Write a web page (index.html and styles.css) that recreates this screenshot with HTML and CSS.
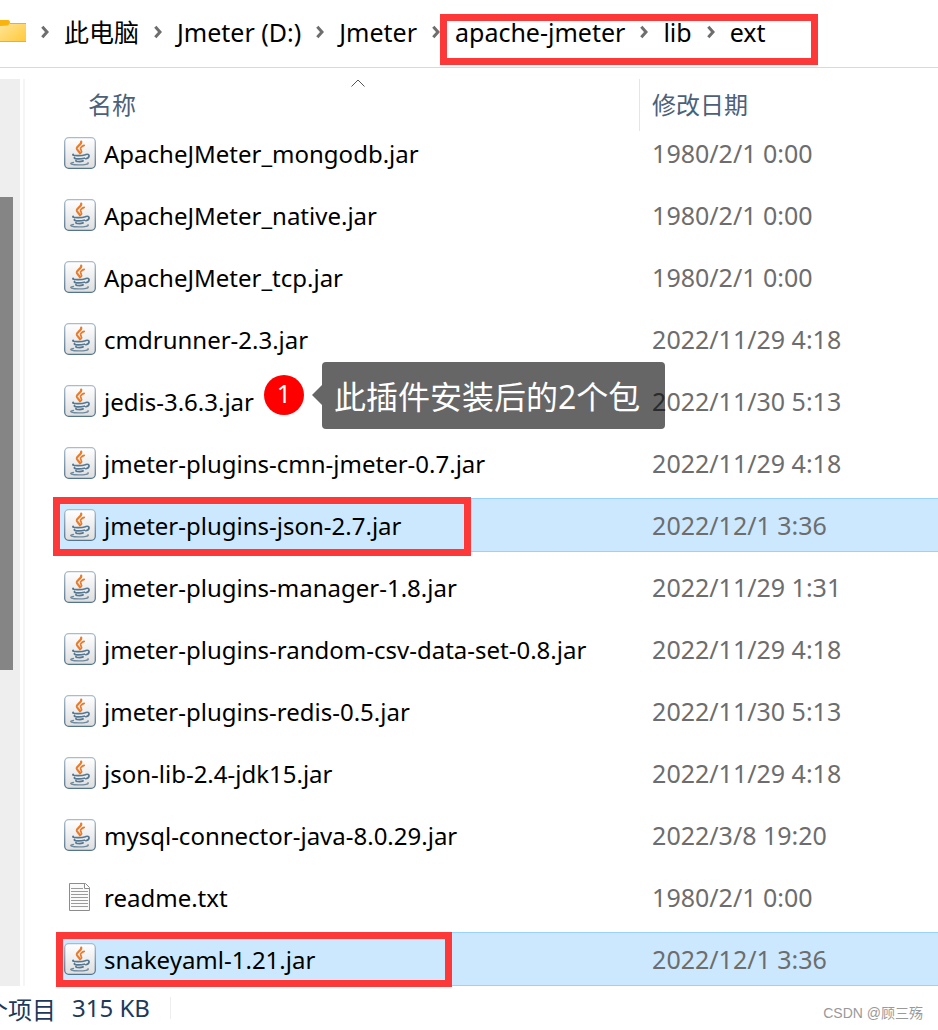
FILE: index.html
```html
<!DOCTYPE html>
<html lang="zh-CN">
<head>
    <meta charset="UTF-8">
    <meta name="viewport" content="width=device-width, initial-scale=1.0">
    <title>ext</title>
    <link rel="stylesheet" href="styles.css">
</head>
<body>
    <svg class="sprite" aria-hidden="true">
        <defs>
            <linearGradient id="paper" x1="0" y1="0" x2="0" y2="1">
                <stop offset="0" stop-color="#ffffff"/>
                <stop offset="1" stop-color="#dedede"/>
            </linearGradient>
            <linearGradient id="frame" x1="0" y1="0" x2="0" y2="1">
                <stop offset="0" stop-color="#a9bccb"/>
                <stop offset="1" stop-color="#55758f"/>
            </linearGradient>
            <linearGradient id="gold" x1="0" y1="0" x2="1" y2="1">
                <stop offset="0" stop-color="#ffe59a"/>
                <stop offset="1" stop-color="#ffc937"/>
            </linearGradient>
        </defs>
        <symbol id="jar" viewBox="0 0 32 32">
            <rect x="0.7" y="0.7" width="30.6" height="30.6" rx="4" fill="url(#paper)" stroke="url(#frame)" stroke-width="1.3"/>
            <g fill="none" stroke-linecap="round">
                <path d="M17.2 4.500c.8 3.100-5 4.500-4.400 7.300.4 1.500 2.500 2.500 3.100 4.500" stroke="#e87b2c" stroke-width="2.200"/>
                <path d="M20.200 8.400c-2.400.9-4.300 2.200-3.600 3.600.7 1.400 1.800 2.300.2 4" stroke="#e87b2c" stroke-width="1.700"/>
                <path d="M9.300 17.300c-1.500.8 1 1.300 4 1.300 2.900.1 5.900-.2 8.200-.9M10.500 20.500c-.6.900.9 1.300 2.900 1.400 2.400.1 4.800-.1 6.900-.7M12 23.400c-.5.700.8 1 2.200 1.100 1.800.1 3.500-.1 4.900-.6M21.800 17.500c4.200-1.300 4.400 3.100.1 4.200" stroke="#557791" stroke-width="1.700"/>
                <path d="M9.500 25.300c-6 1.300-1.300 2.600 5.500 2.600 5.600 0 10.300-.8 9-2.200" stroke="#6d899e" stroke-width="1.300"/>
            </g>
        </symbol>
        <symbol id="txt" viewBox="0 0 32 32">
            <path d="M5.500 2.500h16l4 4v23h-20z" fill="#fafafa" stroke="#8c8c8c"/>
            <path d="M20.500 2.500v5h5" fill="#fff" stroke="#8c8c8c"/>
            <path d="M7 7.500h12M7 10.500h17M7 13.500h17M7 16.500h17M7 19.500h17M7 22.500h17M7 25.500h17" stroke="#9a9a9a"/>
        </symbol>
        <symbol id="chevron" viewBox="0 0 8 14">
            <path d="M1.300 1.800l4.700 5.200-4.700 5.200" fill="none" stroke="#6e6e6e" stroke-width="3"/>
        </symbol>
    </svg>

    <nav class="address" aria-label="地址">
        <svg class="folder" viewBox="0 0 26 24">
            <path d="M0 0h8q2 0 2 3v3H0z" fill="#f9b30f"/>
            <path d="M0 6l8-.5 2-2.500h16V22H0z" fill="url(#gold)"/>
            <path d="M10 3.500h16M0 21.500h26" stroke="#e2b13c"/>
        </svg>
        <svg class="chevron"><use href="#chevron"/></svg>
        <a href="#">此电脑</a>
        <svg class="chevron"><use href="#chevron"/></svg>
        <a href="#">Jmeter (D:)</a>
        <svg class="chevron"><use href="#chevron"/></svg>
        <a href="#">Jmeter</a>
        <svg class="chevron"><use href="#chevron"/></svg>
        <span class="current">
            <a href="#">apache-jmeter</a>
            <svg class="chevron"><use href="#chevron"/></svg>
            <a href="#">lib</a>
            <svg class="chevron"><use href="#chevron"/></svg>
            <a href="#">ext</a>
            <span class="mark mark-path"></span>
        </span>
    </nav>

    <main class="explorer">
        <div class="track"><div class="thumb"></div></div>
        <table class="files">
            <thead>
                <tr>
                    <th class="col-name">名称
                        <svg class="sort" viewBox="0 0 14 8"><path d="M.5 7.500L7 1l6.500 6.500" fill="none" stroke="#555"/></svg>
                    </th>
                    <th class="col-date">修改日期</th>
                </tr>
            </thead>
            <tbody>
                <tr>
                    <td><div class="file"><svg class="icon"><use href="#jar"/></svg>ApacheJMeter_mongodb.jar</div></td>
                    <td class="date">1980/2/1 0:00</td>
                </tr>
                <tr>
                    <td><div class="file"><svg class="icon"><use href="#jar"/></svg>ApacheJMeter_native.jar</div></td>
                    <td class="date">1980/2/1 0:00</td>
                </tr>
                <tr>
                    <td><div class="file"><svg class="icon"><use href="#jar"/></svg>ApacheJMeter_tcp.jar</div></td>
                    <td class="date">1980/2/1 0:00</td>
                </tr>
                <tr>
                    <td><div class="file"><svg class="icon"><use href="#jar"/></svg>cmdrunner-2.3.jar</div></td>
                    <td class="date">2022/11/29 4:18</td>
                </tr>
                <tr>
                    <td>
                        <div class="file"><svg class="icon"><use href="#jar"/></svg>jedis-3.6.3.jar</div>
                        <span class="badge">1</span>
                        <span class="tip">此插件安装后的2个包</span>
                    </td>
                    <td class="date">2022/11/30 5:13</td>
                </tr>
                <tr>
                    <td><div class="file"><svg class="icon"><use href="#jar"/></svg>jmeter-plugins-cmn-jmeter-0.7.jar</div></td>
                    <td class="date">2022/11/29 4:18</td>
                </tr>
                <tr class="selected">
                    <td><div class="file"><svg class="icon"><use href="#jar"/></svg>jmeter-plugins-json-2.7.jar</div><span class="mark mark-json"></span></td>
                    <td class="date">2022/12/1 3:36</td>
                </tr>
                <tr>
                    <td><div class="file"><svg class="icon"><use href="#jar"/></svg>jmeter-plugins-manager-1.8.jar</div></td>
                    <td class="date">2022/11/29 1:31</td>
                </tr>
                <tr>
                    <td><div class="file"><svg class="icon"><use href="#jar"/></svg>jmeter-plugins-random-csv-data-set-0.8.jar</div></td>
                    <td class="date">2022/11/29 4:18</td>
                </tr>
                <tr>
                    <td><div class="file"><svg class="icon"><use href="#jar"/></svg>jmeter-plugins-redis-0.5.jar</div></td>
                    <td class="date">2022/11/30 5:13</td>
                </tr>
                <tr>
                    <td><div class="file"><svg class="icon"><use href="#jar"/></svg>json-lib-2.4-jdk15.jar</div></td>
                    <td class="date">2022/11/29 4:18</td>
                </tr>
                <tr>
                    <td><div class="file"><svg class="icon"><use href="#jar"/></svg>mysql-connector-java-8.0.29.jar</div></td>
                    <td class="date">2022/3/8 19:20</td>
                </tr>
                <tr>
                    <td><div class="file"><svg class="icon"><use href="#txt"/></svg>readme.txt</div></td>
                    <td class="date">1980/2/1 0:00</td>
                </tr>
                <tr class="selected">
                    <td><div class="file"><svg class="icon"><use href="#jar"/></svg>snakeyaml-1.21.jar</div><span class="mark mark-yaml"></span></td>
                    <td class="date">2022/12/1 3:36</td>
                </tr>
            </tbody>
        </table>
    </main>

    <footer class="status">
        <span class="count">个项目</span>
        <span class="size">315 KB</span>
        <span class="credit">CSDN @顾三殇</span>
    </footer>
</body>
</html>
```

FILE: styles.css
```css
* {
    box-sizing: border-box;
}
body {
    margin: 0;
    font-family: "Noto Sans", "Noto Sans CJK SC", sans-serif;
    font-size: 24px;
    color: #000;
    background: #fff;
    overflow-x: hidden;
}
.sprite {
    position: absolute;
    width: 0;
    height: 0;
}

/* address bar */
.address {
    display: flex;
    align-items: center;
    gap: 15px;
    height: 68px;
    padding-bottom: 3px;
    border-bottom: 1px solid #d9d9d9;
    font-size: 25px;
    line-height: 34px;
    white-space: nowrap;
}
.address a {
    color: #000;
    text-decoration: none;
}
.folder {
    width: 26px;
    height: 24px;
    flex: none;
}
.chevron {
    width: 8px;
    height: 14px;
    flex: none;
}
.current {
    position: relative;
    display: flex;
    align-items: center;
    gap: 15px;
}

/* red frames */
.mark {
    position: absolute;
    border: 7px solid #fc3838;
    z-index: 1;
}
.mark-path {
    top: -1px;
    left: -15px;
    right: -52px;
    height: 51px;
}
.mark-json {
    top: -2px;
    left: -3px;
    width: 418px;
    height: 59px;
}
.mark-yaml {
    top: -1px;
    left: 0;
    width: 396px;
    height: 55px;
}

/* file list */
.explorer {
    display: flex;
    padding-top: 11px;
}
.track {
    position: relative;
    flex: none;
    width: 20px;
    margin-right: 36px;
    padding-top: 118px;
    background: #eee;
}
.track::after {
    content: "";
    position: absolute;
    top: 0;
    bottom: 0;
    left: 23px;
    width: 2px;
    background: #f5f5f5;
}
.thumb {
    width: 13px;
    height: 60%;
    max-height: 474px;
    background: #858585;
}
.files {
    flex: 1;
    margin: -8px 0;
    border-spacing: 0 8px;
    table-layout: fixed;
}
th {
    position: relative;
    height: 39px;
    padding: 13px 0 0 32px;
    font-weight: normal;
    line-height: 26px;
    text-align: left;
    color: #4c607a;
}
.col-name {
    width: 66%;
}
.col-date {
    padding-left: 14px;
}
.col-date::before {
    content: "";
    position: absolute;
    top: 0;
    left: 1px;
    width: 1px;
    height: 52px;
    background: #e5e5e5;
}
.sort {
    position: absolute;
    top: 0;
    left: calc(50% + 4px);
    width: 14px;
    height: 8px;
}
td {
    position: relative;
    height: 54px;
    padding: 0;
    border: 1px solid transparent;
    border-width: 1px 0;
    white-space: nowrap;
}
.file {
    display: flex;
    align-items: center;
    gap: 8px;
    padding-left: 8px;
}
.icon {
    width: 32px;
    height: 32px;
}
.date {
    padding-left: 14px;
    font-size: 25px;
    color: #6d6d6d;
}
.selected td {
    background: #cce8ff;
    border-color: #99d1ff;
}

/* note on the list */
.badge {
    position: absolute;
    top: 0;
    left: 208px;
    width: 40px;
    height: 40px;
    border-radius: 50%;
    background: #f00;
    color: #fff;
    font-size: 25px;
    line-height: 36px;
    text-align: center;
}
.tip {
    position: absolute;
    top: -13px;
    left: 266px;
    z-index: 2;
    height: 67px;
    padding: 0 25px 0 12px;
    border-radius: 4px;
    background: rgba(0, 0, 0, 0.6);
    color: #fff;
    font-size: 32px;
    line-height: 69px;
}
.tip::before {
    content: "";
    position: absolute;
    top: 23px;
    left: -10px;
    border: 10px solid transparent;
    border-right-color: rgba(0, 0, 0, 0.6);
    border-left: 0;
}

/* status bar */
.status {
    display: flex;
    align-items: center;
    height: 44px;
    color: #1e395b;
    white-space: nowrap;
}
.count {
    margin-left: -16px;
}
.size {
    margin-left: 16px;
    padding-right: 20px;
    border-right: 1px solid #eee;
    line-height: 22px;
}
.credit {
    margin: 8px 15px 0 auto;
    font-family: "Liberation Sans", "Noto Sans CJK SC", sans-serif;
    font-size: 14px;
    color: #999;
}
```
